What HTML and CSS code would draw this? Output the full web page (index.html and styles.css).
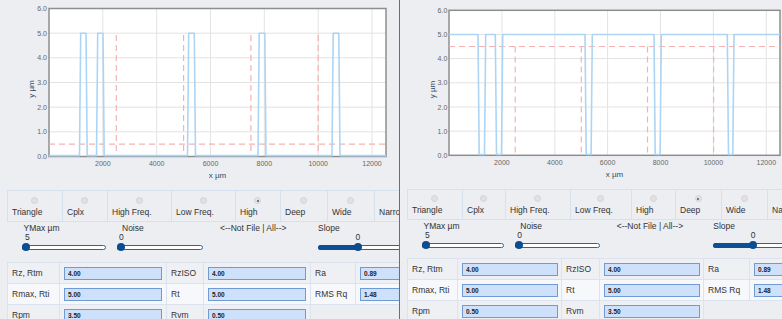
FILE: index.html
```html
<!DOCTYPE html>
<html>
<head>
<meta charset="utf-8">
<title>Profile</title>
<link rel="stylesheet" href="styles.css">
</head>
<body>
<div class="split">
  <section class="panel panel-a">
    <svg class="chart" width="399" height="190" viewBox="0 0 399 190">
      <rect class="plot-bg" x="49" y="8.5" width="337" height="148"/>
      <g class="grid">
        <line x1="102.8" y1="8.5" x2="102.8" y2="156.5"/>
        <line x1="156.7" y1="8.5" x2="156.7" y2="156.5"/>
        <line x1="210.5" y1="8.5" x2="210.5" y2="156.5"/>
        <line x1="264.3" y1="8.5" x2="264.3" y2="156.5"/>
        <line x1="318.2" y1="8.5" x2="318.2" y2="156.5"/>
        <line x1="372" y1="8.5" x2="372" y2="156.5"/>
        <line x1="49" y1="131.8" x2="386" y2="131.8"/>
        <line x1="49" y1="107.2" x2="386" y2="107.2"/>
        <line x1="49" y1="82.5" x2="386" y2="82.5"/>
        <line x1="49" y1="57.8" x2="386" y2="57.8"/>
        <line x1="49" y1="33.2" x2="386" y2="33.2"/>
      </g>
      <rect class="frame" x="49" y="8.5" width="337" height="148"/>
      <g class="ref">
        <line x1="116.3" y1="35" x2="116.3" y2="156"/>
        <line x1="183.6" y1="35" x2="183.6" y2="156"/>
        <line x1="250.9" y1="35" x2="250.9" y2="156"/>
        <line x1="318.2" y1="35" x2="318.2" y2="156"/>
        <line x1="49" y1="144.2" x2="386" y2="144.2"/>
      </g>
      <path class="profile" d="M49,155.6 L79.5,155.6 L80.7,33.2 L86,33.2 L87.2,155.6 L96.5,155.6 L97.7,33.2 L103,33.2 L104.2,155.6 L187.5,155.6 L188.7,33.2 L194.3,33.2 L195.5,155.6 L258,155.6 L259.2,33.2 L264.8,33.2 L266,155.6 L332,155.6 L333.2,33.2 L338.8,33.2 L340,155.6 L386,155.6"/>
      <g class="tick">
        <text x="47" y="11" text-anchor="end">6.0</text>
        <text x="47" y="35.7" text-anchor="end">5.0</text>
        <text x="47" y="60.3" text-anchor="end">4.0</text>
        <text x="47" y="85" text-anchor="end">3.0</text>
        <text x="47" y="109.7" text-anchor="end">2.0</text>
        <text x="47" y="134.3" text-anchor="end">1.0</text>
        <text x="47" y="159" text-anchor="end">0.0</text>
        <text x="102.8" y="165.8" text-anchor="middle">2000</text>
        <text x="156.7" y="165.8" text-anchor="middle">4000</text>
        <text x="210.5" y="165.8" text-anchor="middle">6000</text>
        <text x="264.3" y="165.8" text-anchor="middle">8000</text>
        <text x="318.2" y="165.8" text-anchor="middle">10000</text>
        <text x="372" y="165.8" text-anchor="middle">12000</text>
      </g>
      <text class="axis-title" x="217.5" y="177.8" text-anchor="middle">x µm</text>
      <text class="axis-title" transform="translate(34,89) rotate(-90)" text-anchor="middle">y µm</text>
    </svg>

    <div class="modes">
      <div class="mode"><span class="radio"></span><span class="mode-label">Triangle</span></div>
      <div class="mode"><span class="radio"></span><span class="mode-label">Cplx</span></div>
      <div class="mode"><span class="radio"></span><span class="mode-label">High Freq.</span></div>
      <div class="mode"><span class="radio"></span><span class="mode-label">Low Freq.</span></div>
      <div class="mode"><span class="radio on"></span><span class="mode-label">High</span></div>
      <div class="mode"><span class="radio"></span><span class="mode-label">Deep</span></div>
      <div class="mode"><span class="radio"></span><span class="mode-label">Wide</span></div>
      <div class="mode"><span class="radio"></span><span class="mode-label">Narrow</span></div>
    </div>

    <div class="sliders">
      <div class="slider s-ymax">
        <div class="s-label">YMax µm</div>
        <div class="s-value">5</div>
        <div class="track" style="--p:0"><div class="fill"></div><div class="thumb"></div></div>
      </div>
      <div class="slider s-noise">
        <div class="s-label">Noise</div>
        <div class="s-value">0</div>
        <div class="track" style="--p:0"><div class="fill"></div><div class="thumb"></div></div>
      </div>
      <div class="note">&lt;--Not File | All--&gt;</div>
      <div class="slider s-slope">
        <div class="s-label">Slope</div>
        <div class="s-value">0</div>
        <div class="track" style="--p:0.44"><div class="fill"></div><div class="thumb"></div></div>
      </div>
    </div>

    <table class="params">
      <colgroup><col class="c-lab1"><col class="c-in"><col class="c-lab2"><col class="c-in"><col class="c-lab3"><col class="c-in"></colgroup>
      <tr><td>Rz, Rtm</td><td><input class="val" value="4.00" readonly></td><td>RzISO</td><td><input class="val" value="4.00" readonly></td><td>Ra</td><td><input class="val" value="0.89" readonly></td></tr>
      <tr><td>Rmax, Rti</td><td><input class="val" value="5.00" readonly></td><td>Rt</td><td><input class="val" value="5.00" readonly></td><td>RMS Rq</td><td><input class="val" value="1.48" readonly></td></tr>
      <tr><td>Rpm</td><td><input class="val" value="3.50" readonly></td><td>Rvm</td><td><input class="val" value="0.50" readonly></td></tr>
    </table>
  </section>

  <div class="divider"></div>

  <section class="panel panel-b">
    <svg class="chart" width="382" height="189" viewBox="0 0 382 189">
      <rect class="plot-bg" x="49" y="10.3" width="331" height="145"/>
      <g class="grid">
        <line x1="101.9" y1="10.3" x2="101.9" y2="155.3"/>
        <line x1="154.8" y1="10.3" x2="154.8" y2="155.3"/>
        <line x1="207.6" y1="10.3" x2="207.6" y2="155.3"/>
        <line x1="260.5" y1="10.3" x2="260.5" y2="155.3"/>
        <line x1="313.4" y1="10.3" x2="313.4" y2="155.3"/>
        <line x1="366.3" y1="10.3" x2="366.3" y2="155.3"/>
        <line x1="49" y1="131.1" x2="380" y2="131.1"/>
        <line x1="49" y1="107" x2="380" y2="107"/>
        <line x1="49" y1="82.8" x2="380" y2="82.8"/>
        <line x1="49" y1="58.6" x2="380" y2="58.6"/>
        <line x1="49" y1="34.5" x2="380" y2="34.5"/>
      </g>
      <rect class="frame" x="49" y="10.3" width="331" height="145"/>
      <g class="ref">
        <line x1="115.2" y1="46.5" x2="115.2" y2="155"/>
        <line x1="181.3" y1="46.5" x2="181.3" y2="155"/>
        <line x1="247.5" y1="46.5" x2="247.5" y2="155"/>
        <line x1="313.6" y1="46.5" x2="313.6" y2="155"/>
        <line x1="49" y1="46.5" x2="380" y2="46.5"/>
      </g>
      <path class="profile" d="M49,34.5 L78,34.5 L79.2,154.5 L84.5,154.5 L85.7,34.5 L95.3,34.5 L96.5,154.5 L101.5,154.5 L102.7,34.5 L185,34.5 L186.2,154.5 L191.1,154.5 L192.3,34.5 L254,34.5 L255.2,154.5 L260.1,154.5 L261.3,34.5 L327.3,34.5 L328.5,154.5 L332.8,154.5 L334,34.5 L380,34.5"/>
      <g class="tick">
        <text x="47.3" y="12.8" text-anchor="end">6.0</text>
        <text x="47.3" y="37" text-anchor="end">5.0</text>
        <text x="47.3" y="61.1" text-anchor="end">4.0</text>
        <text x="47.3" y="85.3" text-anchor="end">3.0</text>
        <text x="47.3" y="109.5" text-anchor="end">2.0</text>
        <text x="47.3" y="133.6" text-anchor="end">1.0</text>
        <text x="47.3" y="157.8" text-anchor="end">0.0</text>
        <text x="101.9" y="164.8" text-anchor="middle">2000</text>
        <text x="154.8" y="164.8" text-anchor="middle">4000</text>
        <text x="207.6" y="164.8" text-anchor="middle">6000</text>
        <text x="260.5" y="164.8" text-anchor="middle">8000</text>
        <text x="313.4" y="164.8" text-anchor="middle">10000</text>
        <text x="366.3" y="164.8" text-anchor="middle">12000</text>
      </g>
      <text class="axis-title" x="214.5" y="177" text-anchor="middle">x µm</text>
      <text class="axis-title" transform="translate(35,89.5) rotate(-90)" text-anchor="middle">y µm</text>
    </svg>

    <div class="modes">
      <div class="mode"><span class="radio"></span><span class="mode-label">Triangle</span></div>
      <div class="mode"><span class="radio"></span><span class="mode-label">Cplx</span></div>
      <div class="mode"><span class="radio"></span><span class="mode-label">High Freq.</span></div>
      <div class="mode"><span class="radio"></span><span class="mode-label">Low Freq.</span></div>
      <div class="mode"><span class="radio"></span><span class="mode-label">High</span></div>
      <div class="mode"><span class="radio on"></span><span class="mode-label">Deep</span></div>
      <div class="mode"><span class="radio"></span><span class="mode-label">Wide</span></div>
      <div class="mode"><span class="radio"></span><span class="mode-label">Narrow</span></div>
    </div>

    <div class="sliders">
      <div class="slider s-ymax">
        <div class="s-label">YMax µm</div>
        <div class="s-value">5</div>
        <div class="track" style="--p:0"><div class="fill"></div><div class="thumb"></div></div>
      </div>
      <div class="slider s-noise">
        <div class="s-label">Noise</div>
        <div class="s-value">0</div>
        <div class="track" style="--p:0"><div class="fill"></div><div class="thumb"></div></div>
      </div>
      <div class="note">&lt;--Not File | All--&gt;</div>
      <div class="slider s-slope">
        <div class="s-label">Slope</div>
        <div class="s-value">0</div>
        <div class="track" style="--p:0.44"><div class="fill"></div><div class="thumb"></div></div>
      </div>
    </div>

    <table class="params">
      <colgroup><col class="c-lab1"><col class="c-in"><col class="c-lab2"><col class="c-in"><col class="c-lab3"><col class="c-in"></colgroup>
      <tr><td>Rz, Rtm</td><td><input class="val" value="4.00" readonly></td><td>RzISO</td><td><input class="val" value="4.00" readonly></td><td>Ra</td><td><input class="val" value="0.89" readonly></td></tr>
      <tr><td>Rmax, Rti</td><td><input class="val" value="5.00" readonly></td><td>Rt</td><td><input class="val" value="5.00" readonly></td><td>RMS Rq</td><td><input class="val" value="1.48" readonly></td></tr>
      <tr><td>Rpm</td><td><input class="val" value="0.50" readonly></td><td>Rvm</td><td><input class="val" value="3.50" readonly></td></tr>
    </table>
  </section>
</div>
</body>
</html>
```

FILE: styles.css
```css
* { box-sizing: border-box; }
html, body { margin: 0; padding: 0; }
body {
  width: 782px;
  height: 319px;
  overflow: hidden;
  background: #eceef2;
  font-family: "Liberation Sans", Arial, sans-serif;
  color: #333;
}
.split { display: flex; height: 319px; }
.panel { flex: none; overflow: hidden; height: 319px; }
.panel-a { width: 399px; }
.panel-b { width: 382px; }
.divider { flex: none; width: 1px; background: #3c79b9; }

/* chart */
.chart { display: block; }
.chart text { font-family: "Liberation Sans", Arial, sans-serif; }
.plot-bg { fill: #fff; }
.grid line { stroke: #e3e3e3; stroke-width: 1; }
.frame { fill: none; stroke: #8e8e8e; stroke-width: 1.5; }
.ref line { stroke: #f6b2b2; stroke-width: 1.2; stroke-dasharray: 6 4; }
.profile { fill: none; stroke: #acd5f5; stroke-width: 1.6; stroke-linejoin: round; }
.tick text { font-size: 7px; fill: #666; }
.axis-title { font-size: 8px; fill: #34495e; }

/* mode radios */
.modes {
  display: grid;
  width: max-content;
  margin-left: 7px;
  border: 1px solid #d6e0ee;
  font-size: 8.5px;
}
.panel-a .modes { grid-template-columns: 55px 45px 64px 64px 45px 47px 47px 60px; }
.panel-b .modes { grid-template-columns: 55px 43px 65px 61px 44px 46px 46px 60px; }
.mode {
  border-right: 1px solid #d6e0ee;
  padding: 6px 0 0 4px;
  height: 30px;
}
.panel-b .mode { padding-top: 5px; height: 29px; }
.radio {
  display: block;
  position: relative;
  width: 7px;
  height: 7px;
  margin: 0 auto 3px;
  border-radius: 50%;
  background: #e1e1e1;
  border: 1px solid #d3d3d3;
}
.mode .radio { margin-left: calc(50% - 6px); }
.radio.on::after {
  content: "";
  position: absolute;
  left: 1.5px;
  top: 1.5px;
  width: 2px;
  height: 2px;
  border-radius: 50%;
  background: #555;
}
.mode-label { display: block; line-height: 11px; white-space: nowrap; }

/* sliders */
.sliders {
  display: flex;
  align-items: flex-start;
  padding-top: 1.8px;
  font-size: 8.5px;
}
.panel-a .sliders { height: 40px; }
.panel-b .sliders { height: 38px; }
.slider { flex: none; }
.s-label, .s-value, .note { line-height: 9px; white-space: nowrap; }
.note { flex: none; }
.track {
  position: relative;
  height: 5px;
  margin-top: 3px;
  border: 1px solid #2f64a3;
  border-radius: 3px;
  background: #fff;
}
.fill {
  position: absolute;
  left: -1px;
  top: -1px;
  bottom: -1px;
  width: calc(4px + (100% - 6px) * var(--p));
  background: #0d4f94;
  border-radius: 3px;
}
.thumb {
  position: absolute;
  top: 50%;
  left: calc((100% - 6px) * var(--p) - 1px);
  width: 8px;
  height: 8px;
  margin-top: -4px;
  border-radius: 50%;
  background: #0b4d90;
}
.s-ymax .s-label { margin-left: 1.5px; }
.s-ymax .s-value { margin-left: 3px; }
.s-noise .s-label { margin-left: 5px; }
.s-noise .s-value { margin-left: 2px; }
.s-slope .s-value { margin-left: 37.6px; }
.s-slope { width: 90px; }
.panel-a .s-ymax { margin-left: 22px; width: 84px; }
.panel-a .s-noise { margin-left: 11px; width: 86px; }
.panel-a .note { margin-left: 17px; width: 98px; }
.panel-b .s-ymax { margin-left: 22px; width: 82px; }
.panel-b .s-noise { margin-left: 11.3px; width: 84.7px; }
.panel-b .note { margin-left: 16.7px; width: 96.6px; }

/* parameter table */
.params {
  border-collapse: collapse;
  table-layout: fixed;
  margin-left: 7px;
  font-size: 8.5px;
}
.panel-a .params { width: 455px; }
.panel-b .params { width: 446px; }
.panel-a .c-lab1 { width: 52px; }
.panel-a .c-lab2 { width: 37px; }
.panel-a .c-lab3 { width: 45px; }
.panel-a .c-in { width: 107px; }
.panel-b .c-lab1 { width: 50px; }
.panel-b .c-lab2 { width: 38px; }
.panel-b .c-lab3 { width: 46px; }
.panel-b .c-in { width: 104px; }
.params td {
  height: 21px;
  padding: 0 4px;
  border: 1px solid #dce3ee;
  background: #eef0f4;
  white-space: nowrap;
  vertical-align: middle;
}
.params tr:nth-child(2) td { background: #f7f8fb; }
.val {
  display: block;
  width: 98px;
  height: 13px;
  margin: 0;
  padding: 0 0 0 3px;
  border: 1px solid #6e9bd6;
  background: #cfe0fb;
  font-family: "Liberation Sans", Arial, sans-serif;
  font-weight: bold;
  font-size: 6.5px;
  color: #222;
  outline: none;
}
.panel-b .val { width: 96px; }
```
